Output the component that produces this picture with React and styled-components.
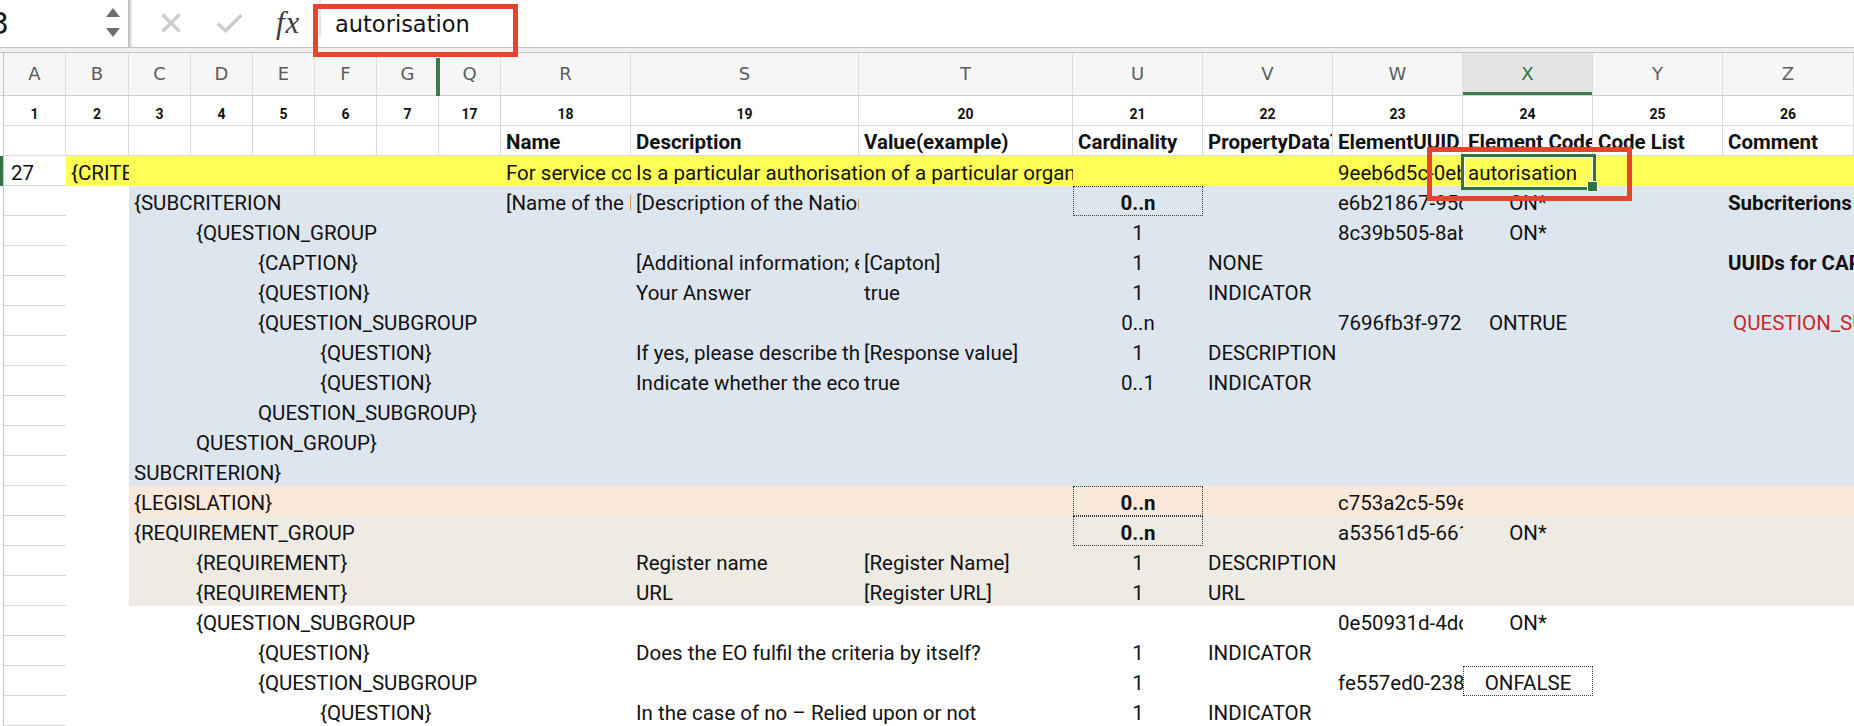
import React from 'react';
import styled, { createGlobalStyle, css } from 'styled-components';

const GlobalStyle = createGlobalStyle`
  html, body { margin: 0; padding: 0; background: #ffffff; overflow: hidden; }
  *, *::before, *::after { box-sizing: border-box; }
`;

const KEYS = ['A', 'B', 'C', 'D', 'E', 'F', 'G', 'Q', 'R', 'S', 'T', 'U', 'V', 'W', 'X', 'Y', 'Z'];
const NUMS = ['1', '2', '3', '4', '5', '6', '7', '17', '18', '19', '20', '21', '22', '23', '24', '25', '26'];
const WIDTHS = [62, 63, 62, 62, 62, 62, 62, 62, 130, 228, 214, 130, 130, 130, 130, 130, 131];
const TEMPLATE = `4px ${WIDTHS.map((w) => `${w}px`).join(' ')}`;
const FILLS = { yellow: '#ffff55', blue: '#dde5ef', peach: '#fae9db', beige: '#edebe3', white: '#ffffff' };
const CELL_FONT = `Roboto, "Liberation Sans", sans-serif`;
const UI_FONT = `"DejaVu Sans", "Liberation Sans", sans-serif`;

/* ---------- formula bar ---------- */

const Page = styled.div`
  position: relative;
  width: 1854px;
  height: 726px;
  overflow: hidden;
  background: #fff;
`;

const FormulaBar = styled.div`
  display: flex;
  align-items: flex-start;
  height: 48px;
  border-bottom: 1px solid #c4c4c4;
  background: #fff;
`;

const NameBox = styled.div`
  width: 104px;
  height: 47px;
  overflow: hidden;
  font: 30px/47px ${UI_FONT};
  color: #1a1a1a;
  white-space: nowrap;
  text-indent: -10px;
`;

const Spinner = styled.div`
  width: 24px;
  height: 47px;
  padding: 8px 0 0 2px;
  display: flex;
  flex-direction: column;
  gap: 11px;
`;

const Arrow = styled.span`
  width: 0;
  height: 0;
  border-left: 7px solid transparent;
  border-right: 7px solid transparent;
  ${(p) => (p.$down ? 'border-top: 9px solid #6e6e6e;' : 'border-bottom: 9px solid #6e6e6e;')}
`;

const Divider = styled.div`
  width: 4px;
  height: 47px;
  border-left: 2px solid #c2c2c2;
  border-right: 2px solid #e4e4e4;
`;

const IconSlot = styled.div`
  margin-left: ${(p) => p.$gap}px;
  margin-top: 13px;
  display: flex;
`;

const Fx = styled.div`
  margin-left: 33px;
  width: 27px;
  font: italic 31px/46px "Liberation Serif", "DejaVu Serif", serif;
  letter-spacing: 1px;
  color: #3c3c3c;
  white-space: nowrap;
`;

const Field = styled.div`
  margin-left: 16px;
  height: 37px;
  padding-left: 14px;
  border-left: 2px solid #e4e4e4;
  display: flex;
  align-items: flex-end;
  font: 22.5px ${UI_FONT};
  color: #111;
  white-space: nowrap;
`;

const Band = styled.div`
  height: 5px;
  background: #efefef;
  border-bottom: 1px solid #c4c4c4;
`;

/* ---------- sheet ---------- */

const SheetRow = styled.div`
  display: grid;
  grid-template-columns: ${TEMPLATE};
  height: ${(p) => p.$h}px;
`;

const Stub = styled.div`
  border-right: 1px solid #c4c4c4;
  background: ${(p) => (p.$active ? '#2f7543' : p.$head ? '#f6f6f6' : '#fff')};
  ${(p) => p.$head && 'border-bottom: 1px solid #cfcfcf;'}
`;

const LetterCell = styled.div`
  position: relative;
  height: 43px;
  border-right: 1px solid #dcdcdc;
  border-bottom: 1px solid #cfcfcf;
  background: ${(p) => (p.$active ? '#e4e4e4' : '#f6f6f6')};
  color: ${(p) => (p.$active ? '#2f7243' : '#5c5c5c')};
  box-shadow: ${(p) => (p.$active ? 'inset 0 -3px 0 #3a7a4b' : 'none')};
  font: 18px/42px ${UI_FONT};
  text-align: center;
  ${(p) =>
    p.$hiddenBefore &&
    css`
      &::before {
        content: '';
        position: absolute;
        left: -3px;
        top: 5px;
        bottom: -1px;
        width: 4px;
        background: #3a7a4b;
      }
    `}
`;

const NumCell = styled.div`
  height: 30px;
  padding-top: 8px;
  border-right: 1px solid #dadada;
  border-bottom: 1px solid #dadada;
  font: 700 14px/20px ${CELL_FONT};
  text-align: center;
  color: #111;
`;

const NameCell = styled.div`
  height: 30px;
  padding: 2px 5px 0;
  border-right: 1px solid #dadada;
  border-bottom: 1px solid #dadada;
  font: 700 20.5px/28px ${CELL_FONT};
  color: #111;
  white-space: pre;
  overflow: hidden;
`;

const DataCell = styled.div`
  grid-column: span ${(p) => p.$span};
  position: relative;
  height: 30px;
  padding: 4px 5px 0 ${(p) => (p.$first ? 7 : 5)}px;
  font: ${(p) => (p.$bold ? 700 : 400)} 20.5px/26px ${CELL_FONT};
  color: ${(p) => (p.$red ? '#c42a2a' : '#111')};
  text-align: ${(p) => (p.$center ? 'center' : 'left')};
  background: ${(p) => p.$bg};
  white-space: pre;
  overflow: ${(p) => (p.$selected ? 'visible' : 'hidden')};
  ${(p) => p.$grid && 'border-bottom: 1px solid #d6d6d6;'}
  ${(p) => p.$dotted && 'border: 1px dotted #3a3a3a; padding-top: 3px;'}
  ${(p) =>
    p.$selected &&
    css`
      z-index: 2;
      &::after {
        content: '';
        position: absolute;
        left: -2px;
        top: -2px;
        right: -3px;
        bottom: -4px;
        border: 3px solid #2f7543;
        box-shadow: inset 0 0 0 1px #fff;
        pointer-events: none;
      }
    `}
`;

const FillHandle = styled.span`
  position: absolute;
  right: -5px;
  bottom: -6px;
  width: 11px;
  height: 11px;
  background: #2f7543;
  border: 1px solid #fff;
  z-index: 3;
`;

const Annotation = styled.div`
  position: absolute;
  left: ${(p) => p.$x}px;
  top: ${(p) => p.$y}px;
  width: ${(p) => p.$w}px;
  height: ${(p) => p.$h}px;
  border: 5px solid #e6442b;
  pointer-events: none;
  z-index: 5;
`;

/* ---------- data ---------- */

const NAMES = { R: 'Name', S: 'Description', T: 'Value(example)', U: 'Cardinality', V: 'PropertyDataType', W: 'ElementUUID', X: 'Element Code', Y: 'Code List', Z: 'Comment' };

const C = { center: true };
const CB = { center: true, bold: true, dotted: true };

const ROWS = [
  {
    fill: 'yellow', from: 'B', active: true,
    cells: [
      ['A', '27'], ['B', '{CRITERION'], ['C', ''],
      ['R', 'For service contracts'], ['S', 'Is a particular authorisation of a particular organisation needed'], ['U', ''],
      ['W', '9eeb6d5c-0eb8-48e8-a4c5-5087a7c095a4'], ['X', 'autorisation', { selected: true, single: true }],
    ],
  },
  {
    fill: 'blue', from: 'C',
    cells: [
      ['C', '{SUBCRITERION'], ['R', '[Name of the National Registry]'], ['S', '[Description of the National Registry]'], ['T', ''],
      ['U', '0..n', CB], ['W', 'e6b21867-95d9-4f9a-b2b6'], ['X', 'ON*', C], ['Z', 'Subcriterions', { bold: true }],
    ],
  },
  {
    fill: 'blue', from: 'C',
    cells: [['D', '{QUESTION_GROUP'], ['U', '1', C], ['W', '8c39b505-8ab1-4c1e-8a72'], ['X', 'ON*', C]],
  },
  {
    fill: 'blue', from: 'C',
    cells: [
      ['E', '{CAPTION}'], ['S', '[Additional information; e.g. name]'], ['T', '[Capton]'], ['U', '1', C], ['V', 'NONE'],
      ['Z', 'UUIDs for CAPTION', { bold: true }],
    ],
  },
  {
    fill: 'blue', from: 'C',
    cells: [['E', '{QUESTION}'], ['S', 'Your Answer'], ['T', 'true'], ['U', '1', C], ['V', 'INDICATOR']],
  },
  {
    fill: 'blue', from: 'C',
    cells: [
      ['E', '{QUESTION_SUBGROUP'], ['U', '0..n', C], ['W', '7696fb3f-9725-4b32-9c17'], ['X', 'ONTRUE', C],
      ['Z', ' QUESTION_SUBGROUP', { red: true }],
    ],
  },
  {
    fill: 'blue', from: 'C',
    cells: [['F', '{QUESTION}'], ['S', 'If yes, please describe them'], ['T', '[Response value]'], ['U', '1', C], ['V', 'DESCRIPTION']],
  },
  {
    fill: 'blue', from: 'C',
    cells: [['F', '{QUESTION}'], ['S', 'Indicate whether the economic operator'], ['T', 'true'], ['U', '0..1', C], ['V', 'INDICATOR']],
  },
  { fill: 'blue', from: 'C', cells: [['E', 'QUESTION_SUBGROUP}']] },
  { fill: 'blue', from: 'C', cells: [['D', 'QUESTION_GROUP}']] },
  { fill: 'blue', from: 'C', cells: [['C', 'SUBCRITERION}']] },
  {
    fill: 'peach', from: 'C',
    cells: [['C', '{LEGISLATION}'], ['U', '0..n', CB], ['W', 'c753a2c5-59e8-4b4f-9f5a'], ['X', '']],
  },
  {
    fill: 'beige', from: 'C',
    cells: [['C', '{REQUIREMENT_GROUP'], ['U', '0..n', CB], ['W', 'a53561d5-6614-4dbe-987e'], ['X', 'ON*', C]],
  },
  {
    fill: 'beige', from: 'C',
    cells: [['D', '{REQUIREMENT}'], ['S', 'Register name'], ['T', '[Register Name]'], ['U', '1', C], ['V', 'DESCRIPTION']],
  },
  {
    fill: 'beige', from: 'C',
    cells: [['D', '{REQUIREMENT}'], ['S', 'URL'], ['T', '[Register URL]'], ['U', '1', C], ['V', 'URL']],
  },
  {
    fill: 'white', from: 'B',
    cells: [['D', '{QUESTION_SUBGROUP'], ['W', '0e50931d-4dc2-4e8f-b1a0'], ['X', 'ON*', C]],
  },
  {
    fill: 'white', from: 'B',
    cells: [['E', '{QUESTION}'], ['S', 'Does the EO fulfil the criteria by itself?'], ['U', '1', C], ['V', 'INDICATOR']],
  },
  {
    fill: 'white', from: 'B',
    cells: [['E', '{QUESTION_SUBGROUP'], ['U', '1', C], ['W', 'fe557ed0-2388-4b8e-a1d5'], ['X', 'ONFALSE', { center: true, dotted: true }]],
  },
  {
    fill: 'white', from: 'B',
    cells: [['F', '{QUESTION}'], ['S', 'In the case of no \u2013 Relied upon or not'], ['U', '1', C], ['V', 'INDICATOR']],
  },
];

function buildCells(row) {
  const map = new Map(row.cells.map(([k, t, o = {}]) => [KEYS.indexOf(k), { text: t, ...o }]));
  const out = [];
  let i = 0;
  while (i < KEYS.length) {
    const c = map.get(i);
    if (c) {
      let span = 1;
      if (!c.center && !c.single) {
        let j = i + 1;
        while (j < KEYS.length && !map.has(j)) j += 1;
        span = j - i;
      }
      out.push({ i, span, ...c });
      i += span;
    } else {
      out.push({ i, span: 1, text: '' });
      i += 1;
    }
  }
  return out;
}

/* ---------- icons ---------- */

const CancelIcon = () => (
  <svg width="22" height="20" viewBox="0 0 22 20">
    <path d="M2.5 1.5 L19.5 18.5 M19.5 1.5 L2.5 18.5" stroke="#cdcdcd" strokeWidth="3.4" fill="none" />
  </svg>
);

const ConfirmIcon = () => (
  <svg width="27" height="20" viewBox="0 0 27 20">
    <path d="M1.8 10.5 L9.5 17.8 L25.5 2" stroke="#cdcdcd" strokeWidth="3.4" fill="none" />
  </svg>
);

/* ---------- app ---------- */

export default function App() {
  const fillFromIdx = (k) => KEYS.indexOf(k);
  return (
    <Page>
      <GlobalStyle />
      <FormulaBar>
        <NameBox>3</NameBox>
        <Spinner>
          <Arrow />
          <Arrow $down />
        </Spinner>
        <Divider />
        <IconSlot $gap={28}>
          <CancelIcon />
        </IconSlot>
        <IconSlot $gap={34}>
          <ConfirmIcon />
        </IconSlot>
        <Fx>fx</Fx>
        <Field>autorisation</Field>
      </FormulaBar>
      <Band />

      <SheetRow $h={43}>
        <Stub $head />
        {KEYS.map((k) => (
          <LetterCell key={k} $active={k === 'X'} $hiddenBefore={k === 'Q'}>
            {k}
          </LetterCell>
        ))}
      </SheetRow>

      <SheetRow $h={30}>
        <Stub />
        {NUMS.map((n) => (
          <NumCell key={n}>{n}</NumCell>
        ))}
      </SheetRow>

      <SheetRow $h={30}>
        <Stub />
        {KEYS.map((k) => (
          <NameCell key={k}>{NAMES[k] || ''}</NameCell>
        ))}
      </SheetRow>

      {ROWS.map((row, r) => {
        const from = fillFromIdx(row.from);
        return (
          <SheetRow key={r} $h={30}>
            <Stub $active={row.active} />
            {buildCells(row).map((c) => (
              <DataCell
                key={c.i}
                $span={c.span}
                $first={c.i === 0}
                $grid={c.i === 0}
                $bg={c.i >= from ? FILLS[row.fill] : '#fff'}
                $center={c.center}
                $bold={c.bold}
                $red={c.red}
                $dotted={c.dotted}
                $selected={c.selected}
              >
                {c.text}
                {c.selected && <FillHandle />}
              </DataCell>
            ))}
          </SheetRow>
        );
      })}

      <Annotation $x={313} $y={4} $w={205} $h={53} />
      <Annotation $x={1427} $y={147} $w={205} $h={54} />
    </Page>
  );
}
